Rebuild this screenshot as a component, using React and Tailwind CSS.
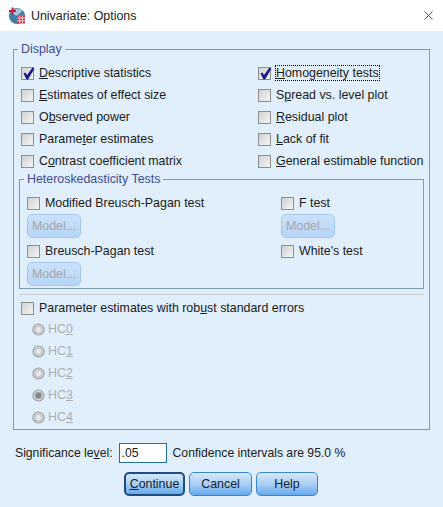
import { X } from 'lucide-react';

const Check = ({ checked }) => (
  <span className="relative w-[13px] h-[13px] shrink-0 border border-[#8e8f8f] bg-gradient-to-br from-[#d2d2d2] to-[#f4f4f4]">
    {checked && (
      <svg className="absolute left-[0px] top-[-1px]" width="13" height="13" viewBox="0 0 13 13">
        <path d="M1.5 6.5 L3.5 5.5 L5 8 L10.5 0.5 L12.5 1.5 L6 12.5 L4.5 12.5 Z" fill="#1b1a8e" />
      </svg>
    )}
  </span>
);

const Radio = ({ on }) => (
  <svg width="13" height="13" viewBox="0 0 13 13" className="shrink-0">
    <circle cx="6.5" cy="6.5" r="5.5" fill="#d8dde2" stroke="#9a9da0" strokeWidth="1.2" />
    <circle cx="6.5" cy="6.5" r="3.4" fill={on ? '#85888b' : '#e6eaee'} stroke="#a9acaf" strokeWidth="0.8" />
  </svg>
);

const Option = ({ checked, focus, children }) => (
  <div className="flex items-center h-[22px] gap-[5px]">
    <Check checked={checked} />
    <span className={focus ? 'outline-1 outline-dotted outline-black leading-[14px]' : ''}>{children}</span>
  </div>
);

const ModelBtn = () => (
  <button disabled className="w-[54px] h-[24px] rounded-[5px] border border-[#9fc8f0] bg-gradient-to-b from-[#cde1f8] to-[#b5d5f5] text-[#a0a7b1]">
    Model...
  </button>
);

const HcRow = ({ on, digit }) => (
  <div className="flex items-center h-[22px] gap-[3px] pl-[11px] text-[#a9aeb4]">
    <Radio on={on} />
    <span>HC<u>{digit}</u></span>
  </div>
);

const ActionBtn = ({ width, focus, children }) => (
  <button className={`${width} h-[24px] rounded-[5px] border text-[#14202e] bg-gradient-to-b from-[#d6e7fa] via-[#a9cff5] to-[#62aaed] ${focus ? 'border-[#1d4c80] border-2' : 'border-[#3a85cc]'}`}>
    {children}
  </button>
);

export default function App() {
  return (
    <div className="w-[443px] h-[507px] overflow-hidden bg-[#e1eefb] text-[12.4px] text-[#1a1c20] font-['Liberation_Sans',Arial,sans-serif]">
      <div className="h-[31px] bg-white flex items-center pl-[7px] pr-[7px]">
        <svg width="22" height="22" viewBox="0 0 22 22" className="shrink-0">
          <circle cx="10" cy="11" r="8" fill="#3f7fa8" />
          <path d="M4 8 A8 8 0 0 1 16 5 L10 11 Z" fill="#a9c6d8" />
          <path d="M2 6 H9 M5.5 2.5 V9.5" stroke="#c3203a" strokeWidth="2" fill="none" />
          <rect x="10" y="10.5" width="8" height="8" fill="#d2344d" />
          <path d="M10 13 H18 M10 15.8 H18 M12.7 10.5 V18.5 M15.4 10.5 V18.5" stroke="#f6d5da" strokeWidth="0.9" />
        </svg>
        <span className="ml-[2px] pt-[1px] text-[#222]">Univariate: Options</span>
        <X className="ml-auto text-[#222]" size={15} strokeWidth={1.25} />
      </div>

      <div className="px-[13px] pt-[11px]">
        <fieldset className="w-[416px] h-[388px] border border-[#7b9bb3] pl-[7px] pr-[5px]">
          <legend className="-ml-[3px] px-[3px] text-[#3d4c91] leading-[14px]">Display</legend>

          <div className="grid grid-cols-[237px_1fr] pt-[6px]">
            <div>
              <Option checked><u>D</u>escriptive statistics</Option>
              <Option><u>E</u>stimates of effect size</Option>
              <Option>O<u>b</u>served power</Option>
              <Option>Parame<u>t</u>er estimates</Option>
              <Option>C<u>o</u>ntrast coefficient matrix</Option>
            </div>
            <div>
              <Option checked focus><u>H</u>omogeneity tests</Option>
              <Option>S<u>p</u>read vs. level plot</Option>
              <Option><u>R</u>esidual plot</Option>
              <Option><u>L</u>ack of fit</Option>
              <Option><u>G</u>eneral estimable function</Option>
            </div>
          </div>

          <fieldset className="-ml-[2px] w-[405px] h-[117px] border border-[#7b9bb3] pl-[7px] pt-[6px]">
            <legend className="-ml-[3px] px-[3px] text-[#3d4c91] leading-[14px]">Heteroskedasticity Tests</legend>
            <div className="grid grid-cols-[254px_1fr]">
              <div className="flex flex-col items-start">
                <Option>Modified Breusch-Pagan test</Option>
                <ModelBtn />
                <div className="mt-[2px]"><Option>Breusch-Pagan test</Option></div>
                <ModelBtn />
              </div>
              <div className="flex flex-col items-start">
                <Option>F test</Option>
                <ModelBtn />
                <div className="mt-[2px]"><Option>White's test</Option></div>
              </div>
            </div>
          </fieldset>

          <div className="-ml-[2px] mt-[5px] w-[405px] h-[1px] bg-[#c9cfd4]" />
          <div className="mt-[2px]">
            <Option>Parameter estimates with ro<span>b</span><u>u</u>st standard errors</Option>
            <div className="-mt-[1px]">
              <HcRow digit="0" />
              <HcRow digit="1" />
              <HcRow digit="2" />
              <HcRow digit="3" on />
              <HcRow digit="4" />
            </div>
          </div>
        </fieldset>
      </div>

      <div className="flex items-center mt-[13px] pl-[15px] h-[20px] text-[12.2px]">
        <span className="pt-[1px]">Significance le<u>v</u>el:</span>
        <input defaultValue=".05" className="ml-[6px] w-[48px] h-[20px] border border-[#1f6fb0] bg-white px-[2px] text-[#1a1c20] outline-none" />
        <span className="ml-[6px] pt-[1px]">Confidence intervals are 95.0 %</span>
      </div>

      <div className="flex mt-[9px] pl-[124px] gap-[4px]">
        <ActionBtn width="w-[61px]" focus><u>C</u>ontinue</ActionBtn>
        <ActionBtn width="w-[63px]">Cancel</ActionBtn>
        <ActionBtn width="w-[62px]">Help</ActionBtn>
      </div>
    </div>
  );
}
